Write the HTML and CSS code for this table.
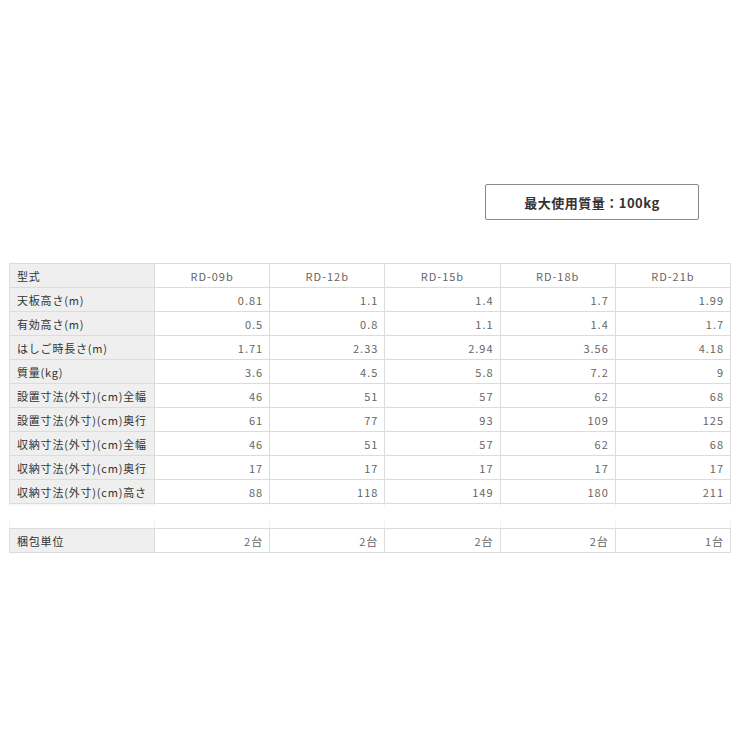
FILE: index.html
```
<!DOCTYPE html>
<html lang="ja">
<head>
<meta charset="utf-8">
<link rel="stylesheet" href="styles.css">
</head>
<body>
<div class="page">
  <div class="badge-row"><div class="badge">最大使用質量：100kg</div></div>
  <table class="spec">
    <colgroup><col class="c-label"><col><col><col><col><col></colgroup>
    <tr class="head"><th>型式</th><td>RD-09b</td><td>RD-12b</td><td>RD-15b</td><td>RD-18b</td><td>RD-21b</td></tr>
    <tr><th>天板高さ(m)</th><td>0.81</td><td>1.1</td><td>1.4</td><td>1.7</td><td>1.99</td></tr>
    <tr><th>有効高さ(m)</th><td>0.5</td><td>0.8</td><td>1.1</td><td>1.4</td><td>1.7</td></tr>
    <tr><th>はしご時長さ(m)</th><td>1.71</td><td>2.33</td><td>2.94</td><td>3.56</td><td>4.18</td></tr>
    <tr><th>質量(kg)</th><td>3.6</td><td>4.5</td><td>5.8</td><td>7.2</td><td>9</td></tr>
    <tr><th>設置寸法(外寸)(cm)全幅</th><td>46</td><td>51</td><td>57</td><td>62</td><td>68</td></tr>
    <tr><th>設置寸法(外寸)(cm)奥行</th><td>61</td><td>77</td><td>93</td><td>109</td><td>125</td></tr>
    <tr><th>収納寸法(外寸)(cm)全幅</th><td>46</td><td>51</td><td>57</td><td>62</td><td>68</td></tr>
    <tr><th>収納寸法(外寸)(cm)奥行</th><td>17</td><td>17</td><td>17</td><td>17</td><td>17</td></tr>
    <tr><th>収納寸法(外寸)(cm)高さ</th><td>88</td><td>118</td><td>149</td><td>180</td><td>211</td></tr>
    <tr class="thin"><th></th><td></td><td></td><td></td><td></td><td></td></tr>
  </table>
  <table class="spec second">
    <colgroup><col class="c-label"><col><col><col><col><col></colgroup>
    <tr class="thin top"><th></th><td></td><td></td><td></td><td></td><td></td></tr>
    <tr><th>梱包単位</th><td>2台</td><td>2台</td><td>2台</td><td>2台</td><td>1台</td></tr>
  </table>
</div>
</body>
</html>
```
FILE: styles.css
```
html, body {
  margin: 0;
  padding: 0;
  background: #fff;
}
body {
  font-family: "Noto Sans CJK JP", "Noto Sans", sans-serif;
  color: #333;
}
.page {
  padding: 184px 9px 0 9px;
}
.badge-row {
  display: flex;
  justify-content: flex-end;
  padding-right: 32px;
}
.badge {
  width: 212px;
  height: 34px;
  border: 1px solid #8a8a8a;
  border-radius: 2px;
  display: flex;
  align-items: center;
  justify-content: center;
  font-size: 13px;
  font-weight: 700;
  color: #333;
  letter-spacing: 0.5px;
}
.spec {
  margin-top: 43px;
  width: 722px;
  border-collapse: collapse;
  table-layout: fixed;
  font-size: 11px;
}
.c-label {
  width: 145px;
}
.spec th, .spec td {
  border: 1px solid #dcdcdc;
  height: 23px;
  padding: 0 6px;
  line-height: 14px;
}
.spec th {
  background: #efefef;
  text-align: left;
  font-weight: 400;
  color: #333;
  padding-left: 7px;
  letter-spacing: 0.8px;
  white-space: nowrap;
}
.spec td {
  text-align: right;
  color: #666;
  letter-spacing: 1px;
}
.spec .head td {
  text-align: center;
}
.spec tr.thin th, .spec tr.thin td {
  height: 2px;
  padding: 0;
  border-color: #f2f2f2;
  border-bottom: none;
}
.spec tr.thin th {
  background: #f8f8f8;
}
.spec.second {
  margin-top: 14px;
}
.spec tr.thin.top th, .spec tr.thin.top td {
  border-top: none;
  border-bottom: 1px solid #dcdcdc;
  height: 8px;
}
.spec tr.thin.top th {
  background: #fff;
}
```
